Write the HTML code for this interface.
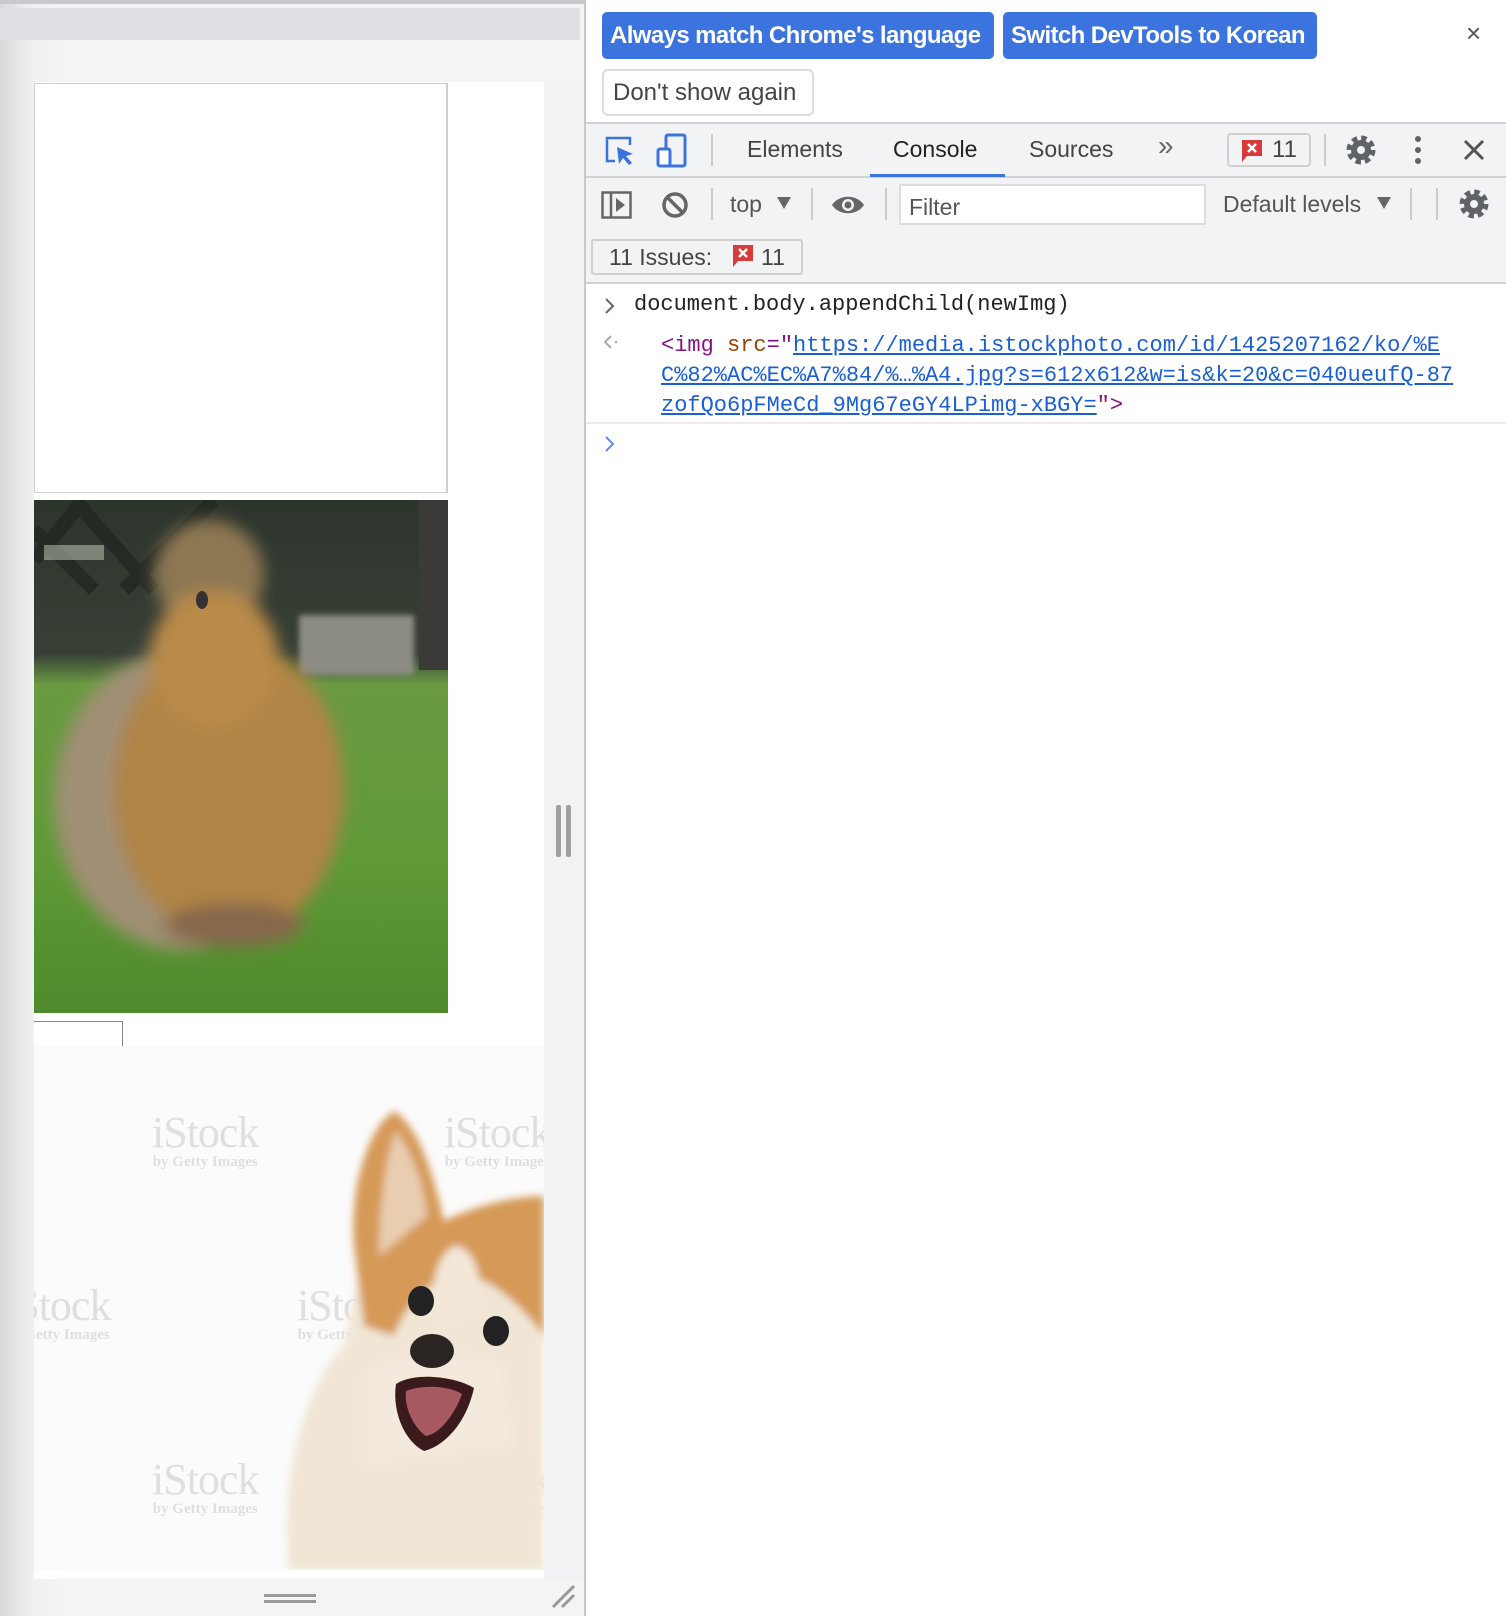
<!DOCTYPE html>
<html><head><meta charset="utf-8">
<style>
*{margin:0;padding:0;box-sizing:border-box}
body{width:1506px;height:1616px;position:relative;overflow:hidden;background:#fff;font-family:"Liberation Sans",Arial,sans-serif}
.a{position:absolute}
.btn{position:absolute;background:#3b73df;color:#fff;font-weight:bold;font-size:24px;border-radius:5px;line-height:47px;padding-left:8px;letter-spacing:-0.6px;white-space:nowrap}
.tab{position:absolute;font-size:23px;color:#444;top:136px}
.mono{font-family:"Liberation Mono",monospace;font-size:22px;position:absolute;white-space:pre}
.u{color:#1a5fd6;text-decoration:underline}
.wm{position:absolute;color:rgba(200,200,200,0.55);font-family:"Liberation Serif",serif;text-align:center;line-height:1}
.wm b{display:block;font-size:44px;font-weight:normal;letter-spacing:-1px}
.wm i{display:block;font-size:15px;font-style:normal;font-weight:bold}
</style></head><body>
<div class="a" style="left:0;top:0;width:585px;height:1616px;background:linear-gradient(90deg,#d9d9d9 0,#efefef 30px,#f3f4f4 60px)"></div>
<div class="a" style="left:0;top:0;width:585px;height:4px;background:#c8c9cc"></div>
<div class="a" style="left:0;top:8px;width:580px;height:32px;background:#dfe0e3"></div>
<div class="a" style="left:34px;top:82px;width:510px;height:1497px;background:#fff"></div>
<div class="a" style="left:544px;top:82px;width:40px;height:1497px;background:#f1f2f3"></div>
<div class="a" style="left:556px;top:805px;width:5px;height:52px;background:#a0a0a0;border-radius:2px"></div>
<div class="a" style="left:566px;top:805px;width:5px;height:52px;background:#a0a0a0;border-radius:2px"></div>
<div class="a" style="left:34px;top:83px;width:414px;height:410px;border:1px solid #cfcfd2;border-right-width:2px"></div>
<svg class="a" style="left:34px;top:500px" width="414" height="513" viewBox="0 0 414 513">
<defs>
<linearGradient id="bg" x1="0" y1="0" x2="0" y2="1"><stop offset="0" stop-color="#2c342c"/><stop offset="0.3" stop-color="#384036"/><stop offset="0.36" stop-color="#6a9a42"/><stop offset="0.7" stop-color="#5f9a36"/><stop offset="1" stop-color="#4f8a2c"/></linearGradient>
<filter id="bl"><feGaussianBlur stdDeviation="8"/></filter>
<filter id="bl2"><feGaussianBlur stdDeviation="3"/></filter>
</defs>
<rect width="414" height="513" fill="url(#bg)"/>
<path d="M0 60 L50 0 M40 0 L120 90 M90 90 L180 0 M0 30 L60 90" stroke="#1f251f" stroke-width="14" opacity="0.7"/>
<rect x="10" y="45" width="60" height="15" fill="#c8d0c0" opacity="0.5"/>
<rect x="265" y="115" width="115" height="60" fill="#8c8c84" filter="url(#bl2)"/>
<rect x="385" y="0" width="29" height="170" fill="#3a3a38"/>
<g filter="url(#bl)">
<ellipse cx="150" cy="300" rx="130" ry="150" fill="#a08f74"/>
<ellipse cx="195" cy="290" rx="115" ry="150" fill="#b08445"/>
<ellipse cx="175" cy="75" rx="55" ry="55" fill="#8d7753"/>
<ellipse cx="180" cy="160" rx="65" ry="70" fill="#b98a48"/>
<ellipse cx="200" cy="425" rx="70" ry="22" fill="#86684c"/>
</g>
<ellipse cx="168" cy="100" rx="6" ry="9" fill="#333"/>
</svg>
<div class="a" style="left:34px;top:1021px;width:89px;height:26px;border:1px solid #888;border-left:none;background:#fff"></div>
<div class="a" style="left:34px;top:1046px;width:510px;height:524px;background:#fbfbfb;overflow:hidden">
 <div class="wm" style="left:118px;top:65px"><b>iStock</b><i>by Getty Images</i></div>
 <div class="wm" style="left:410px;top:65px"><b>iStock</b><i>by Getty Images</i></div>
 <div class="wm" style="left:-30px;top:238px"><b>iStock</b><i>by Getty Images</i></div>
 <div class="wm" style="left:263px;top:238px"><b>iStock</b><i>by Getty Images</i></div>
 <div class="wm" style="left:118px;top:412px"><b>iStock</b><i>by Getty Images</i></div>
 <div class="wm" style="left:410px;top:412px"><b>iStock</b><i>by Getty Images</i></div>
 <svg class="a" style="left:0;top:0" width="510" height="524" viewBox="0 0 510 524">
  <defs><filter id="db"><feGaussianBlur stdDeviation="4"/></filter></defs>
  <g filter="url(#db)">
  <path d="M255 524 C245 430 270 340 310 300 L330 200 L510 160 L510 524Z" fill="#f1e6d6"/>
  <path d="M320 200 C315 140 335 80 360 65 C385 80 400 130 410 175 C440 160 480 150 510 150 L510 290 C480 250 450 230 430 230 C410 230 380 240 360 290 L330 280Z" fill="#d69a58"/>
  <path d="M345 210 C345 150 355 100 362 85 C380 110 390 140 393 170Z" fill="#e9cdb0"/>
  <path d="M420 200 C440 200 450 230 445 270 L400 280 C395 250 400 210 420 200Z" fill="#f3e7d8"/>
  <path d="M330 330 C350 300 420 300 470 320 L480 400 L330 420Z" fill="#f3e9dc"/>
  </g>
  <ellipse cx="387" cy="255" rx="13" ry="15" fill="#222"/>
  <ellipse cx="462" cy="285" rx="13" ry="15" fill="#222"/>
  <ellipse cx="398" cy="305" rx="22" ry="17" fill="#2a2522"/>
  <path d="M362 338 C380 326 420 330 440 342 C432 378 410 400 390 405 C370 395 358 365 362 338Z" fill="#3a1a1a"/>
  <path d="M372 345 C390 338 415 340 428 348 C420 370 405 388 392 390 C380 382 370 362 372 345Z" fill="#a85a62"/>
 </svg>
</div>
<div class="a" style="left:264px;top:1594px;width:52px;height:3px;background:#999"></div>
<div class="a" style="left:264px;top:1600px;width:52px;height:3px;background:#999"></div>
<svg class="a" style="left:550px;top:1583px" width="28" height="28"><path d="M3 24 L24 3 M12 24 L24 12" stroke="#999" stroke-width="3"/></svg>

<div class="a" style="left:584px;top:0;width:2px;height:1616px;background:#c8c9cc"></div>
<div class="a" style="left:586px;top:0;width:920px;height:1616px;background:#fff"></div>
<div class="btn" style="left:602px;top:12px;width:392px">Always match Chrome's language</div>
<div class="btn" style="left:1003px;top:12px;width:314px">Switch DevTools to Korean</div>
<div class="a" style="left:1466px;top:18px;font-size:26px;color:#555">×</div>
<div class="a" style="left:602px;top:69px;width:212px;height:47px;border:2px solid #ddd;border-radius:6px;font-size:24px;color:#444;line-height:43px;padding-left:9px">Don't show again</div>
<div class="a" style="left:586px;top:122px;width:920px;height:56px;background:#f1f3f4;border-top:2px solid #d0d1d4;border-bottom:2px solid #d0d1d4"></div>
<svg class="a" style="left:604px;top:135px" width="34" height="34" viewBox="0 0 34 34"><path d="M11 26 H3 V3 H26 V10" fill="none" stroke="#3b73df" stroke-width="2.5"/><path d="M13 12 L29 19 L22 21 L28 28 L25 30 L19 23 L15 29Z" fill="#3b73df"/></svg>
<svg class="a" style="left:655px;top:133px" width="34" height="36" viewBox="0 0 34 36"><rect x="11" y="2" width="19" height="31" rx="2" fill="none" stroke="#3b73df" stroke-width="3"/><rect x="3" y="16" width="12" height="17" rx="2" fill="#fff" stroke="#3b73df" stroke-width="3"/></svg>
<div class="a" style="left:711px;top:134px;width:2px;height:32px;background:#ccc"></div>
<div class="tab" style="left:747px">Elements</div>
<div class="tab" style="left:893px;color:#222">Console</div>
<div class="tab" style="left:1029px">Sources</div>
<div class="a" style="left:870px;top:174px;width:135px;height:3px;background:#3b73df"></div>
<div class="a" style="left:1158px;top:130px;font-size:28px;color:#666">»</div>
<div class="a" style="left:1227px;top:133px;width:84px;height:34px;border:2px solid #d0d0d0;border-radius:4px"></div>
<svg class="a" style="left:1241px;top:139px" width="22" height="24"><path d="M1 1 H21 V17 H6 L1 23Z" fill="#d93a3a"/><path d="M7 5 L15 13 M15 5 L7 13" stroke="#fff" stroke-width="2.5"/></svg>
<div class="a" style="left:1272px;top:136px;font-size:24px;color:#444">11</div>
<div class="a" style="left:1324px;top:134px;width:2px;height:32px;background:#ccc"></div>
<svg class="a" style="left:1345px;top:134px" width="32" height="32" viewBox="0 0 32 32"><circle cx="16" cy="16" r="10" fill="#5f6368"/><circle cx="16" cy="16" r="12" fill="none" stroke="#5f6368" stroke-width="5" stroke-dasharray="5.4 4"/><circle cx="16" cy="16" r="4" fill="#f1f3f4"/></svg>
<div class="a" style="left:1415px;top:136px;width:6px;height:6px;border-radius:3px;background:#5f6368;box-shadow:0 11px 0 #5f6368,0 22px 0 #5f6368"></div>
<svg class="a" style="left:1462px;top:138px" width="24" height="24"><path d="M3 3 L21 21 M21 3 L3 21" stroke="#555" stroke-width="3"/></svg>
<div class="a" style="left:586px;top:178px;width:920px;height:106px;background:#f1f3f4;border-bottom:2px solid #d0d1d4"></div>
<svg class="a" style="left:601px;top:191px" width="32" height="28"><rect x="1.5" y="1.5" width="28" height="25" fill="none" stroke="#666" stroke-width="2.5"/><path d="M10 2 V26" stroke="#666" stroke-width="2.5"/><path d="M15 7 L24 14 L15 21Z" fill="#666"/></svg>
<svg class="a" style="left:661px;top:191px" width="28" height="28"><circle cx="14" cy="14" r="11" fill="none" stroke="#666" stroke-width="3.5"/><path d="M6 6 L22 22" stroke="#666" stroke-width="3.5"/></svg>
<div class="a" style="left:711px;top:188px;width:2px;height:32px;background:#ccc"></div>
<div class="a" style="left:730px;top:191px;font-size:23px;color:#555">top</div>
<svg class="a" style="left:777px;top:197px" width="14" height="12"><path d="M0 0 H14 L7 12Z" fill="#666"/></svg>
<div class="a" style="left:811px;top:188px;width:2px;height:32px;background:#ccc"></div>
<svg class="a" style="left:831px;top:194px" width="34" height="22" viewBox="0 0 34 22"><path d="M1 11 C8 0 26 0 33 11 C26 22 8 22 1 11Z" fill="#666"/><circle cx="17" cy="11" r="6" fill="#f1f3f4"/><circle cx="17" cy="11" r="3.5" fill="#666"/></svg>
<div class="a" style="left:885px;top:188px;width:2px;height:32px;background:#ccc"></div>
<div class="a" style="left:899px;top:184px;width:307px;height:41px;background:#fff;border:2px solid #ddd;font-size:23px;color:#555;padding:8px 8px">Filter</div>
<div class="a" style="left:1223px;top:191px;font-size:23px;color:#555">Default levels</div>
<svg class="a" style="left:1377px;top:197px" width="14" height="12"><path d="M0 0 H14 L7 12Z" fill="#666"/></svg>
<div class="a" style="left:1410px;top:188px;width:2px;height:32px;background:#ccc"></div>
<div class="a" style="left:1436px;top:188px;width:2px;height:32px;background:#ccc"></div>
<svg class="a" style="left:1458px;top:188px" width="32" height="32" viewBox="0 0 32 32"><circle cx="16" cy="16" r="10" fill="#5f6368"/><circle cx="16" cy="16" r="12" fill="none" stroke="#5f6368" stroke-width="5" stroke-dasharray="5.4 4"/><circle cx="16" cy="16" r="4" fill="#f1f3f4"/></svg>
<div class="a" style="left:591px;top:239px;width:212px;height:36px;border:2px solid #d0d0d0;border-radius:3px;background:#f1f3f4"></div>
<div class="a" style="left:609px;top:244px;font-size:23px;color:#444">11 Issues:</div>
<svg class="a" style="left:732px;top:244px" width="22" height="24"><path d="M1 1 H21 V17 H6 L1 23Z" fill="#d93a3a"/><path d="M7 5 L15 13 M15 5 L7 13" stroke="#fff" stroke-width="2.5"/></svg>
<div class="a" style="left:761px;top:244px;font-size:23px;color:#444">11</div>
<svg class="a" style="left:604px;top:297px" width="12" height="18"><path d="M2 2 L9 9 L2 16" fill="none" stroke="#666" stroke-width="2"/></svg>
<div class="mono" style="left:634px;top:292px;color:#222">document.body.appendChild(newImg)</div>
<svg class="a" style="left:603px;top:335px" width="16" height="14"><path d="M8 1 L2 7 L8 13" fill="none" stroke="#aaa" stroke-width="2"/><circle cx="13" cy="7" r="1.3" fill="#aaa"/></svg>
<div class="mono" style="left:661px;top:331px;line-height:30px"><span style="color:#881280">&lt;img</span> <span style="color:#994500">src</span><span style="color:#881280">="</span><span class="u">https://media.istockphoto.com/id/1425207162/ko/%E</span>
<span class="u">C%82%AC%EC%A7%84/%…%A4.jpg?s=612x612&amp;w=is&amp;k=20&amp;c=040ueufQ-87</span>
<span class="u">zofQo6pFMeCd_9Mg67eGY4LPimg-xBGY=</span><span style="color:#881280">"&gt;</span></div>
<div class="a" style="left:586px;top:422px;width:920px;height:2px;background:#ececec"></div>
<svg class="a" style="left:604px;top:435px" width="12" height="18"><path d="M2 2 L9 9 L2 16" fill="none" stroke="#5a8ff0" stroke-width="2"/></svg>
</body></html>
